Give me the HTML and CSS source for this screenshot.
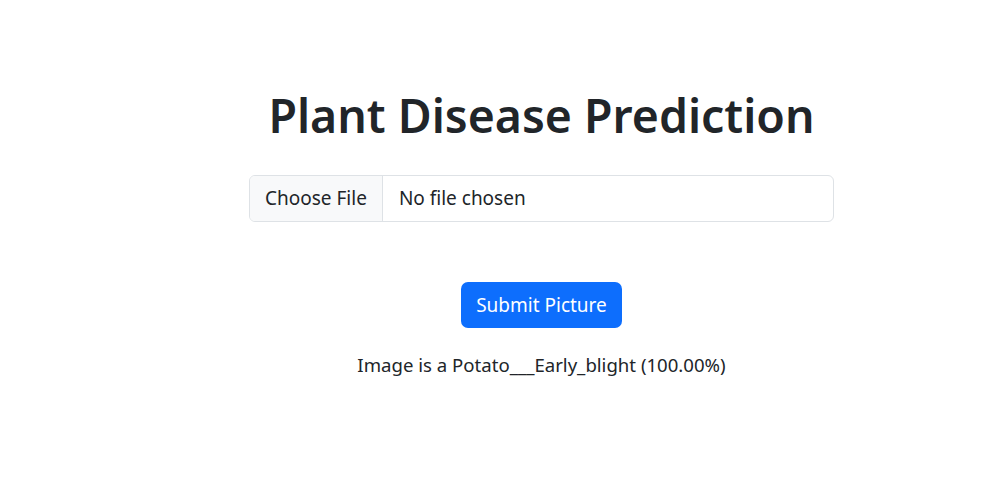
FILE: index.html
```html
<!DOCTYPE html>
<html lang="en">
<head>
  <meta charset="UTF-8">
  <meta name="viewport" content="width=device-width, initial-scale=1.0">
  <title>Plant Disease Prediction</title>
  <link rel="stylesheet" href="styles.css">
</head>
<body>
  <div class="container">
    <h1>Plant Disease Prediction</h1>
    <form class="upload-form">
      <label class="file-input">
        <span class="file-btn">Choose File</span>
        <span class="file-name">No file chosen</span>
      </label>
      <button type="button" class="btn-submit">Submit Picture</button>
    </form>
    <p class="result">Image is a Potato___Early_blight (100.00%)</p>
  </div>
</body>
</html>
```

FILE: styles.css
```css
body {
  font-family: 'Noto Sans', 'Open Sans', Arial, sans-serif;
  color: #212529;
  background: #fff;
  margin: 0;
  padding: 0;
}

.container {
  width: 585px;
  margin-left: 249px;
  padding-top: 88px;
  text-align: center;
}

h1 {
  font-size: 46.4px;
  font-weight: 600;
  line-height: 1.2;
  margin: 0 0 31px;
}

.upload-form {
  display: flex;
  flex-direction: column;
  align-items: center;
}

.file-input {
  display: flex;
  width: 100%;
  height: 47px;
  box-sizing: border-box;
  border: 1px solid #dee2e6;
  border-radius: 6px;
  overflow: hidden;
  font-size: 19px;
  text-align: left;
}

.file-btn {
  display: flex;
  align-items: center;
  padding: 0 15px;
  background: #f8f9fa;
  border-right: 1px solid #dee2e6;
}

.file-name {
  display: flex;
  align-items: center;
  padding: 0 16px;
}

.btn-submit {
  margin-top: 60px;
  height: 46px;
  padding: 0 15px;
  font-family: inherit;
  font-size: 19px;
  color: #fff;
  background-color: #0d6efd;
  border: none;
  border-radius: 7px;
  cursor: pointer;
}

.result {
  margin: 24px 0 0;
  font-size: 18.6px;
}
```
